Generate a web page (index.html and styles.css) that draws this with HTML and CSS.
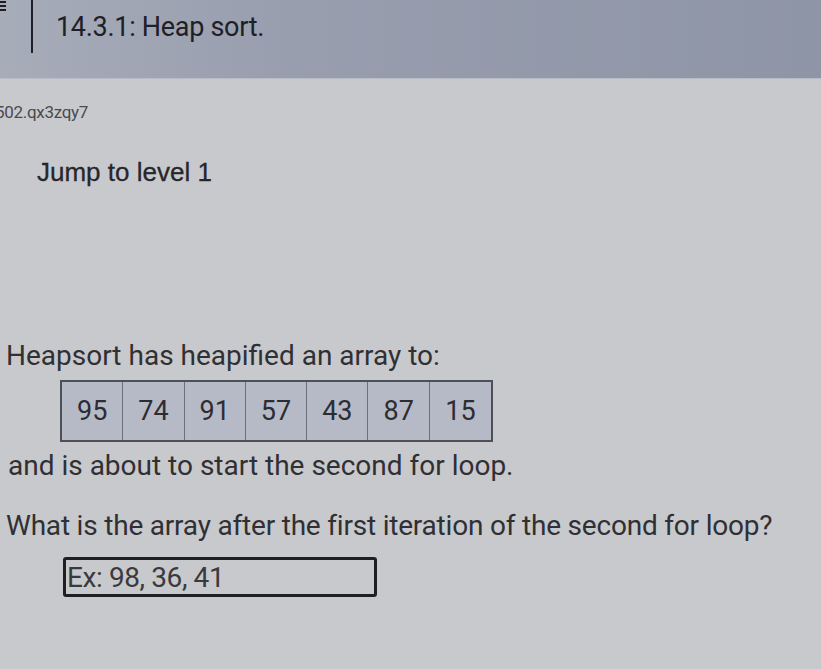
FILE: index.html
```html
<!DOCTYPE html>
<html>
<head>
<meta charset="utf-8">
<link rel="stylesheet" href="styles.css">
</head>
<body>
<header class="topbar">
  <div class="menu"><span></span><span></span><span></span></div>
  <div class="divider"></div>
  <h1 class="title">14.3.1: Heap sort.</h1>
</header>
<main class="content">
  <div class="code">502.qx3zqy7</div>
  <div class="level">Jump to level 1</div>
  <p class="text first">Heapsort has heapified an array to:</p>
  <div class="array">
    <div class="cell">95</div>
    <div class="cell">74</div>
    <div class="cell">91</div>
    <div class="cell">57</div>
    <div class="cell">43</div>
    <div class="cell">87</div>
    <div class="cell">15</div>
  </div>
  <p class="text after">and is about to start the second for loop.</p>
  <p class="text question">What is the array after the first iteration of the second for loop?</p>
  <div class="answer"><span class="placeholder">Ex: 98, 36, 41</span></div>
</main>
</body>
</html>
```

FILE: styles.css
```css
html, body {
  margin: 0;
  padding: 0;
}
body {
  width: 821px;
  height: 669px;
  overflow: hidden;
  background: #c8c9cc;
  font-family: Roboto, "Liberation Sans", sans-serif;
  color: #2e2e30;
}
.topbar {
  height: 79px;
  background: linear-gradient(90deg, #a7acb9 0%, #989eae 35%, #8e95a6 100%);
  display: flex;
  align-items: flex-start;
  border-bottom: 1px solid #b8bcc6;
  box-sizing: border-box;
}
.menu {
  width: 6px;
  display: flex;
  flex-direction: column;
  gap: 2px;
  padding-top: 1px;
}
.menu span {
  display: block;
  height: 2px;
  background: #1e1e22;
}
.divider {
  width: 2px;
  height: 53px;
  background: #1e1e24;
  margin-left: 25px;
}
.title {
  margin: 11px 0 0 23px;
  font-size: 27px;
  font-weight: 400;
  color: #1f2026;
  letter-spacing: -0.3px;
}
.code {
  margin-top: 24px;
  margin-left: -5px;
  font-size: 17px;
  line-height: 19px;
  color: #4a4a4e;
  letter-spacing: -0.3px;
}
.level {
  margin: 35px 0 0 37px;
  font-family: "Liberation Sans", Arial, sans-serif;
  font-size: 26px;
  line-height: 30px;
  color: #26262b;
  -webkit-text-stroke: 0.3px #26262b;
}
.text {
  margin: 0;
  font-size: 28px;
  line-height: 32px;
  color: #303034;
}
.first {
  margin: 153px 0 0 6px;
}
.array {
  display: flex;
  margin: 8px 0 0 60px;
  width: fit-content;
  border: 2px solid #4e5058;
  background: #b6bac6;
}
.cell {
  width: 61.3px;
  height: 58px;
  box-sizing: border-box;
  border-right: 1px solid #6d7079;
  display: flex;
  align-items: center;
  justify-content: center;
  font-size: 27px;
  color: #2c2d33;
}
.cell:last-child {
  border-right: none;
}
.after {
  margin: 8px 0 0 8px;
}
.question {
  margin: 28px 0 0 6px;
  letter-spacing: -0.2px;
}
.answer {
  margin: 15px 0 0 63px;
  width: 314px;
  height: 40px;
  box-sizing: border-box;
  border: 3px solid #1f1f22;
  border-radius: 3px;
  display: flex;
  align-items: center;
  padding-left: 1px;
}
.placeholder {
  font-size: 28px;
  color: #3a3a3e;
  letter-spacing: -0.4px;
}
```
